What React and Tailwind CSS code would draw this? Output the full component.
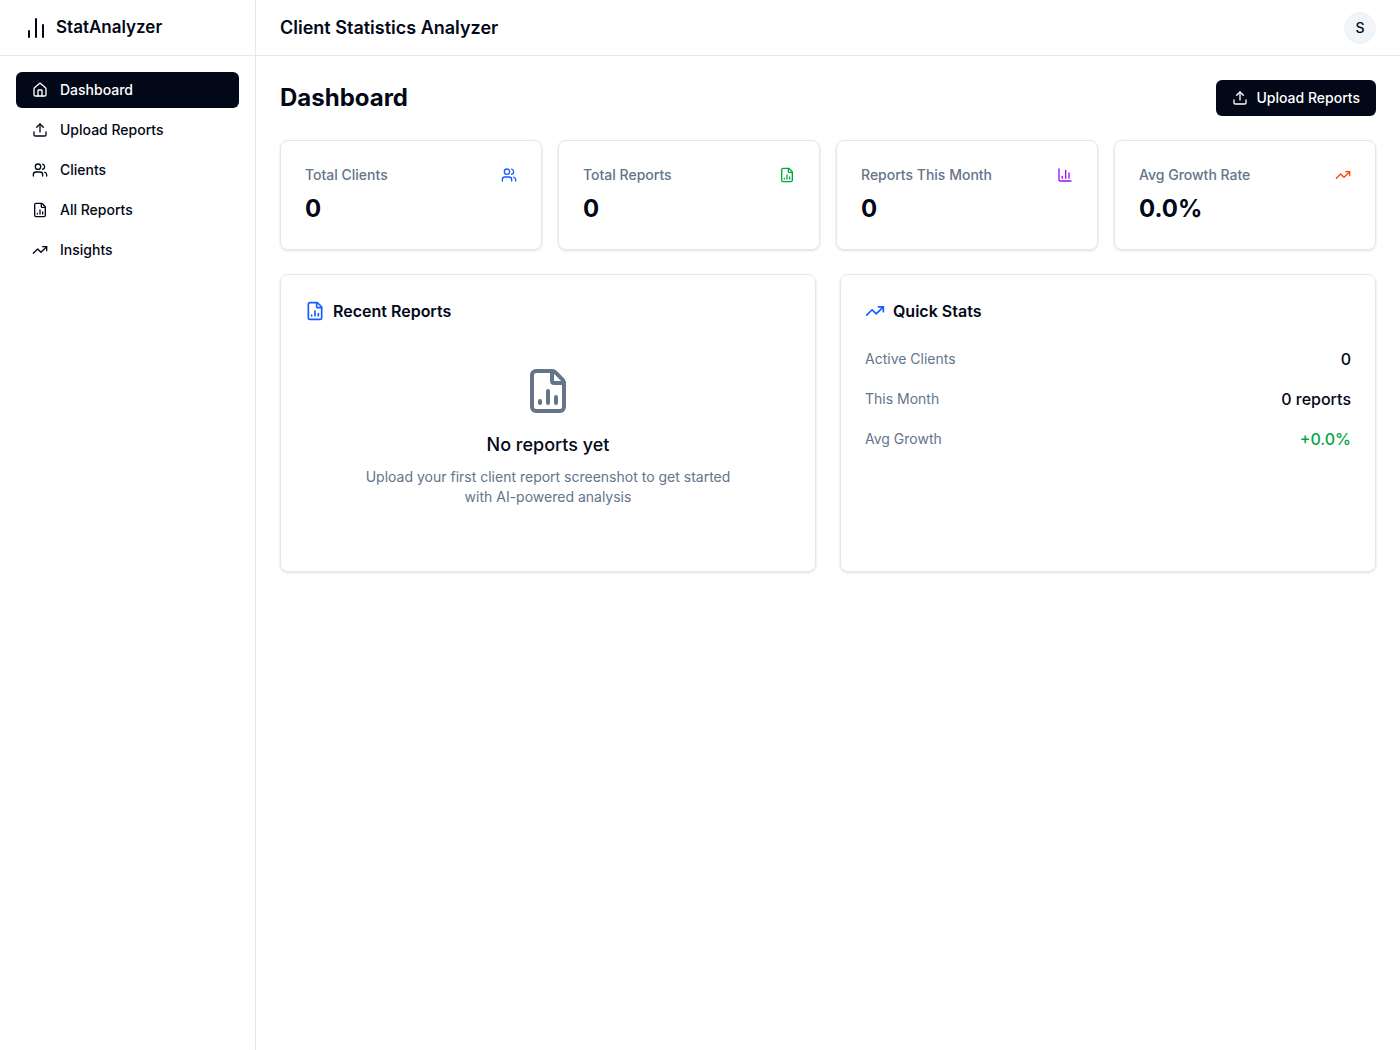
import React from "react";
import { BarChart3, ChartNoAxesColumn, FileChartColumn, Home, TrendingUp, Upload, Users } from "lucide-react";

const nav = [
  { label: "Dashboard", icon: Home, active: true },
  { label: "Upload Reports", icon: Upload },
  { label: "Clients", icon: Users },
  { label: "All Reports", icon: FileChartColumn },
  { label: "Insights", icon: TrendingUp },
];

const stats = [
  { label: "Total Clients", value: "0", icon: Users, color: "text-blue-600" },
  { label: "Total Reports", value: "0", icon: FileChartColumn, color: "text-green-600" },
  { label: "Reports This Month", value: "0", icon: BarChart3, color: "text-purple-600" },
  { label: "Avg Growth Rate", value: "0.0%", icon: TrendingUp, color: "text-orange-600" },
];

const quick = [
  { label: "Active Clients", value: "0", color: "text-[#020817]" },
  { label: "This Month", value: "0 reports", color: "text-[#020817]" },
  { label: "Avg Growth", value: "+0.0%", color: "text-green-600" },
];

export default function App() {
  return (
    <div className="flex h-[1050px] bg-white text-[#020817] font-['Inter',sans-serif]">
      <aside className="w-[256px] shrink-0 border-r border-[#e2e8f0]">
        <div className="h-[56px] flex items-center gap-2 px-6 border-b border-[#e2e8f0]">
          <ChartNoAxesColumn className="w-6 h-6" />
          <span className="text-[17px] font-semibold">StatAnalyzer</span>
        </div>
        <nav className="flex flex-col gap-1 p-4">
          {nav.map((item) => (
            <div
              key={item.label}
              className={`h-9 flex items-center gap-3 px-4 rounded-md text-sm font-medium ${item.active ? "bg-[#020817] text-white" : ""}`}
            >
              <item.icon className="w-4 h-4" />
              {item.label}
            </div>
          ))}
        </nav>
      </aside>
      <div className="flex-1 min-w-0">
        <header className="h-[56px] flex items-center justify-between px-6 border-b border-[#e2e8f0]">
          <h1 className="text-lg font-semibold">Client Statistics Analyzer</h1>
          <div className="w-8 h-8 rounded-full bg-[#f1f5f9] flex items-center justify-center text-sm font-medium">S</div>
        </header>
        <main className="p-6">
          <div className="flex items-center justify-between mb-6">
            <h2 className="text-2xl font-bold">Dashboard</h2>
            <button className="h-9 px-4 flex items-center gap-2 rounded-md bg-[#020817] text-white text-sm font-medium">
              <Upload className="w-4 h-4" />
              Upload Reports
            </button>
          </div>
          <div className="grid grid-cols-4 gap-4 mb-6">
            {stats.map((s) => (
              <div key={s.label} className="h-[110px] rounded-lg border border-[#e2e8f0] shadow-sm p-6">
                <div className="flex items-center justify-between">
                  <span className="text-sm font-medium text-[#64748b]">{s.label}</span>
                  <s.icon className={`w-4 h-4 ${s.color}`} />
                </div>
                <div className="text-2xl font-bold mt-2">{s.value}</div>
              </div>
            ))}
          </div>
          <div className="grid grid-cols-2 gap-6">
            <section className="h-[298px] rounded-lg border border-[#e2e8f0] shadow-sm p-6">
              <div className="flex items-center gap-2 font-semibold">
                <FileChartColumn className="w-5 h-5 text-blue-600" />
                Recent Reports
              </div>
              <div className="flex flex-col items-center text-center mt-[44px]">
                <FileChartColumn className="w-12 h-12 text-[#64748b]" />
                <h3 className="text-lg font-medium mt-4">No reports yet</h3>
                <p className="text-sm text-[#64748b] mt-2 max-w-[380px] leading-5">
                  Upload your first client report screenshot to get started with AI-powered analysis
                </p>
              </div>
            </section>
            <section className="h-[298px] rounded-lg border border-[#e2e8f0] shadow-sm p-6">
              <div className="flex items-center gap-2 font-semibold">
                <TrendingUp className="w-5 h-5 text-blue-600" />
                Quick Stats
              </div>
              <div className="flex flex-col gap-4 mt-6">
                {quick.map((q) => (
                  <div key={q.label} className="h-6 flex items-center justify-between">
                    <span className="text-sm text-[#64748b]">{q.label}</span>
                    <span className={`font-medium ${q.color}`}>{q.value}</span>
                  </div>
                ))}
              </div>
            </section>
          </div>
        </main>
      </div>
    </div>
  );
}
